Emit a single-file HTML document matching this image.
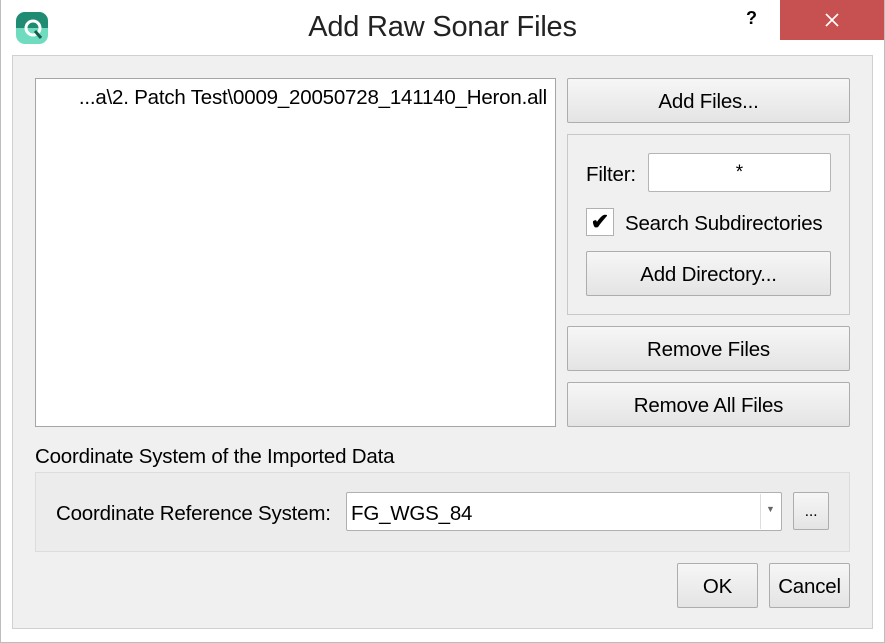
<!DOCTYPE html>
<html><head><meta charset="utf-8"><style>
body{margin:0;width:885px;height:643px;overflow:hidden;background:#fff;font-family:"Liberation Sans",sans-serif;color:#000;position:relative}
.a{position:absolute;box-sizing:border-box}
.btn{position:absolute;box-sizing:border-box;border:1px solid #adadad;border-radius:2px;background:linear-gradient(#f6f6f6,#e4e4e4);font-size:20.5px;display:flex;align-items:center;justify-content:center;letter-spacing:-0.2px;padding-top:2px}
.t{position:absolute;font-size:20.5px;white-space:nowrap;letter-spacing:-0.2px}
</style></head><body>
<div class="a" style="left:0;top:0;width:885px;height:643px;border:1px solid #bdbdbd;border-top:none"></div>
<svg class="a" style="left:16px;top:12px" width="32" height="32" viewBox="0 0 32 32"><rect x="0" y="0" width="32" height="32" rx="9" fill="#6fdcc0"/><path d="M0 9a9 9 0 0 1 9-9h14a9 9 0 0 1 9 9v7H0z" fill="#1f8b73"/><circle cx="17" cy="16" r="7" fill="none" stroke="#fff" stroke-width="3"/><path d="M19 19l6 7" stroke="#145c4c" stroke-width="3"/></svg>
<div class="t" style="left:0;width:885px;text-align:center;top:11px;font-size:29px;color:#222">Add Raw Sonar Files</div>
<div class="t" style="left:746px;top:8px;font-size:18px;font-weight:bold">?</div>
<div class="a" style="left:780px;top:0;width:104px;height:40px;background:#c75050"><svg width="104" height="40"><path d="M46 14l12 12M58 14l-12 12" stroke="#fff" stroke-width="1.6"/></svg></div>
<div class="a" style="left:12px;top:55px;width:861px;height:574px;background:#f0f0f0;border:1px solid #d0d0d0"></div>
<div class="a" style="left:35px;top:78px;width:521px;height:349px;background:#fff;border:1px solid #a5a5a5"></div>
<div class="t" style="right:338px;top:86px">...a\2. Patch Test\0009_20050728_141140_Heron.all</div>
<div class="btn" style="left:567px;top:78px;width:283px;height:45px">Add Files...</div>
<div class="a" style="left:567px;top:134px;width:283px;height:181px;border:1px solid #c8c8c8"></div>
<div class="t" style="left:586px;top:163px">Filter:</div>
<div class="a" style="left:648px;top:153px;width:183px;height:39px;background:#fff;border:1px solid #b5b5b5;border-radius:2px;text-align:center;font-size:19px;line-height:37px">*</div>
<div class="a" style="left:586px;top:208px;width:28px;height:28px;background:#fff;border:1px solid #b0b0b0;text-align:center;font-size:22px;line-height:26px;font-weight:bold">✔</div>
<div class="t" style="left:625px;top:212px">Search Subdirectories</div>
<div class="btn" style="left:586px;top:251px;width:245px;height:45px">Add Directory...</div>
<div class="btn" style="left:567px;top:326px;width:283px;height:45px">Remove Files</div>
<div class="btn" style="left:567px;top:382px;width:283px;height:45px">Remove All Files</div>
<div class="t" style="left:35px;top:445px">Coordinate System of the Imported Data</div>
<div class="a" style="left:35px;top:472px;width:815px;height:80px;background:#ececec;border:1px solid #dcdcdc"></div>
<div class="t" style="left:56px;top:502px">Coordinate Reference System:</div>
<div class="a" style="left:346px;top:492px;width:436px;height:39px;background:#fff;border:1px solid #b0b0b0;border-radius:2px"></div>
<div class="t" style="left:351px;top:502px">FG_WGS_84</div>
<div class="a" style="left:760px;top:494px;width:1px;height:35px;background:#ddd"></div>
<div class="t" style="left:766px;top:504px;font-size:9px;color:#666">▼</div>
<div class="btn" style="left:793px;top:492px;width:36px;height:38px;font-size:16px">...</div>
<div class="btn" style="left:677px;top:563px;width:81px;height:45px">OK</div>
<div class="btn" style="left:769px;top:563px;width:81px;height:45px">Cancel</div>
</body></html>
